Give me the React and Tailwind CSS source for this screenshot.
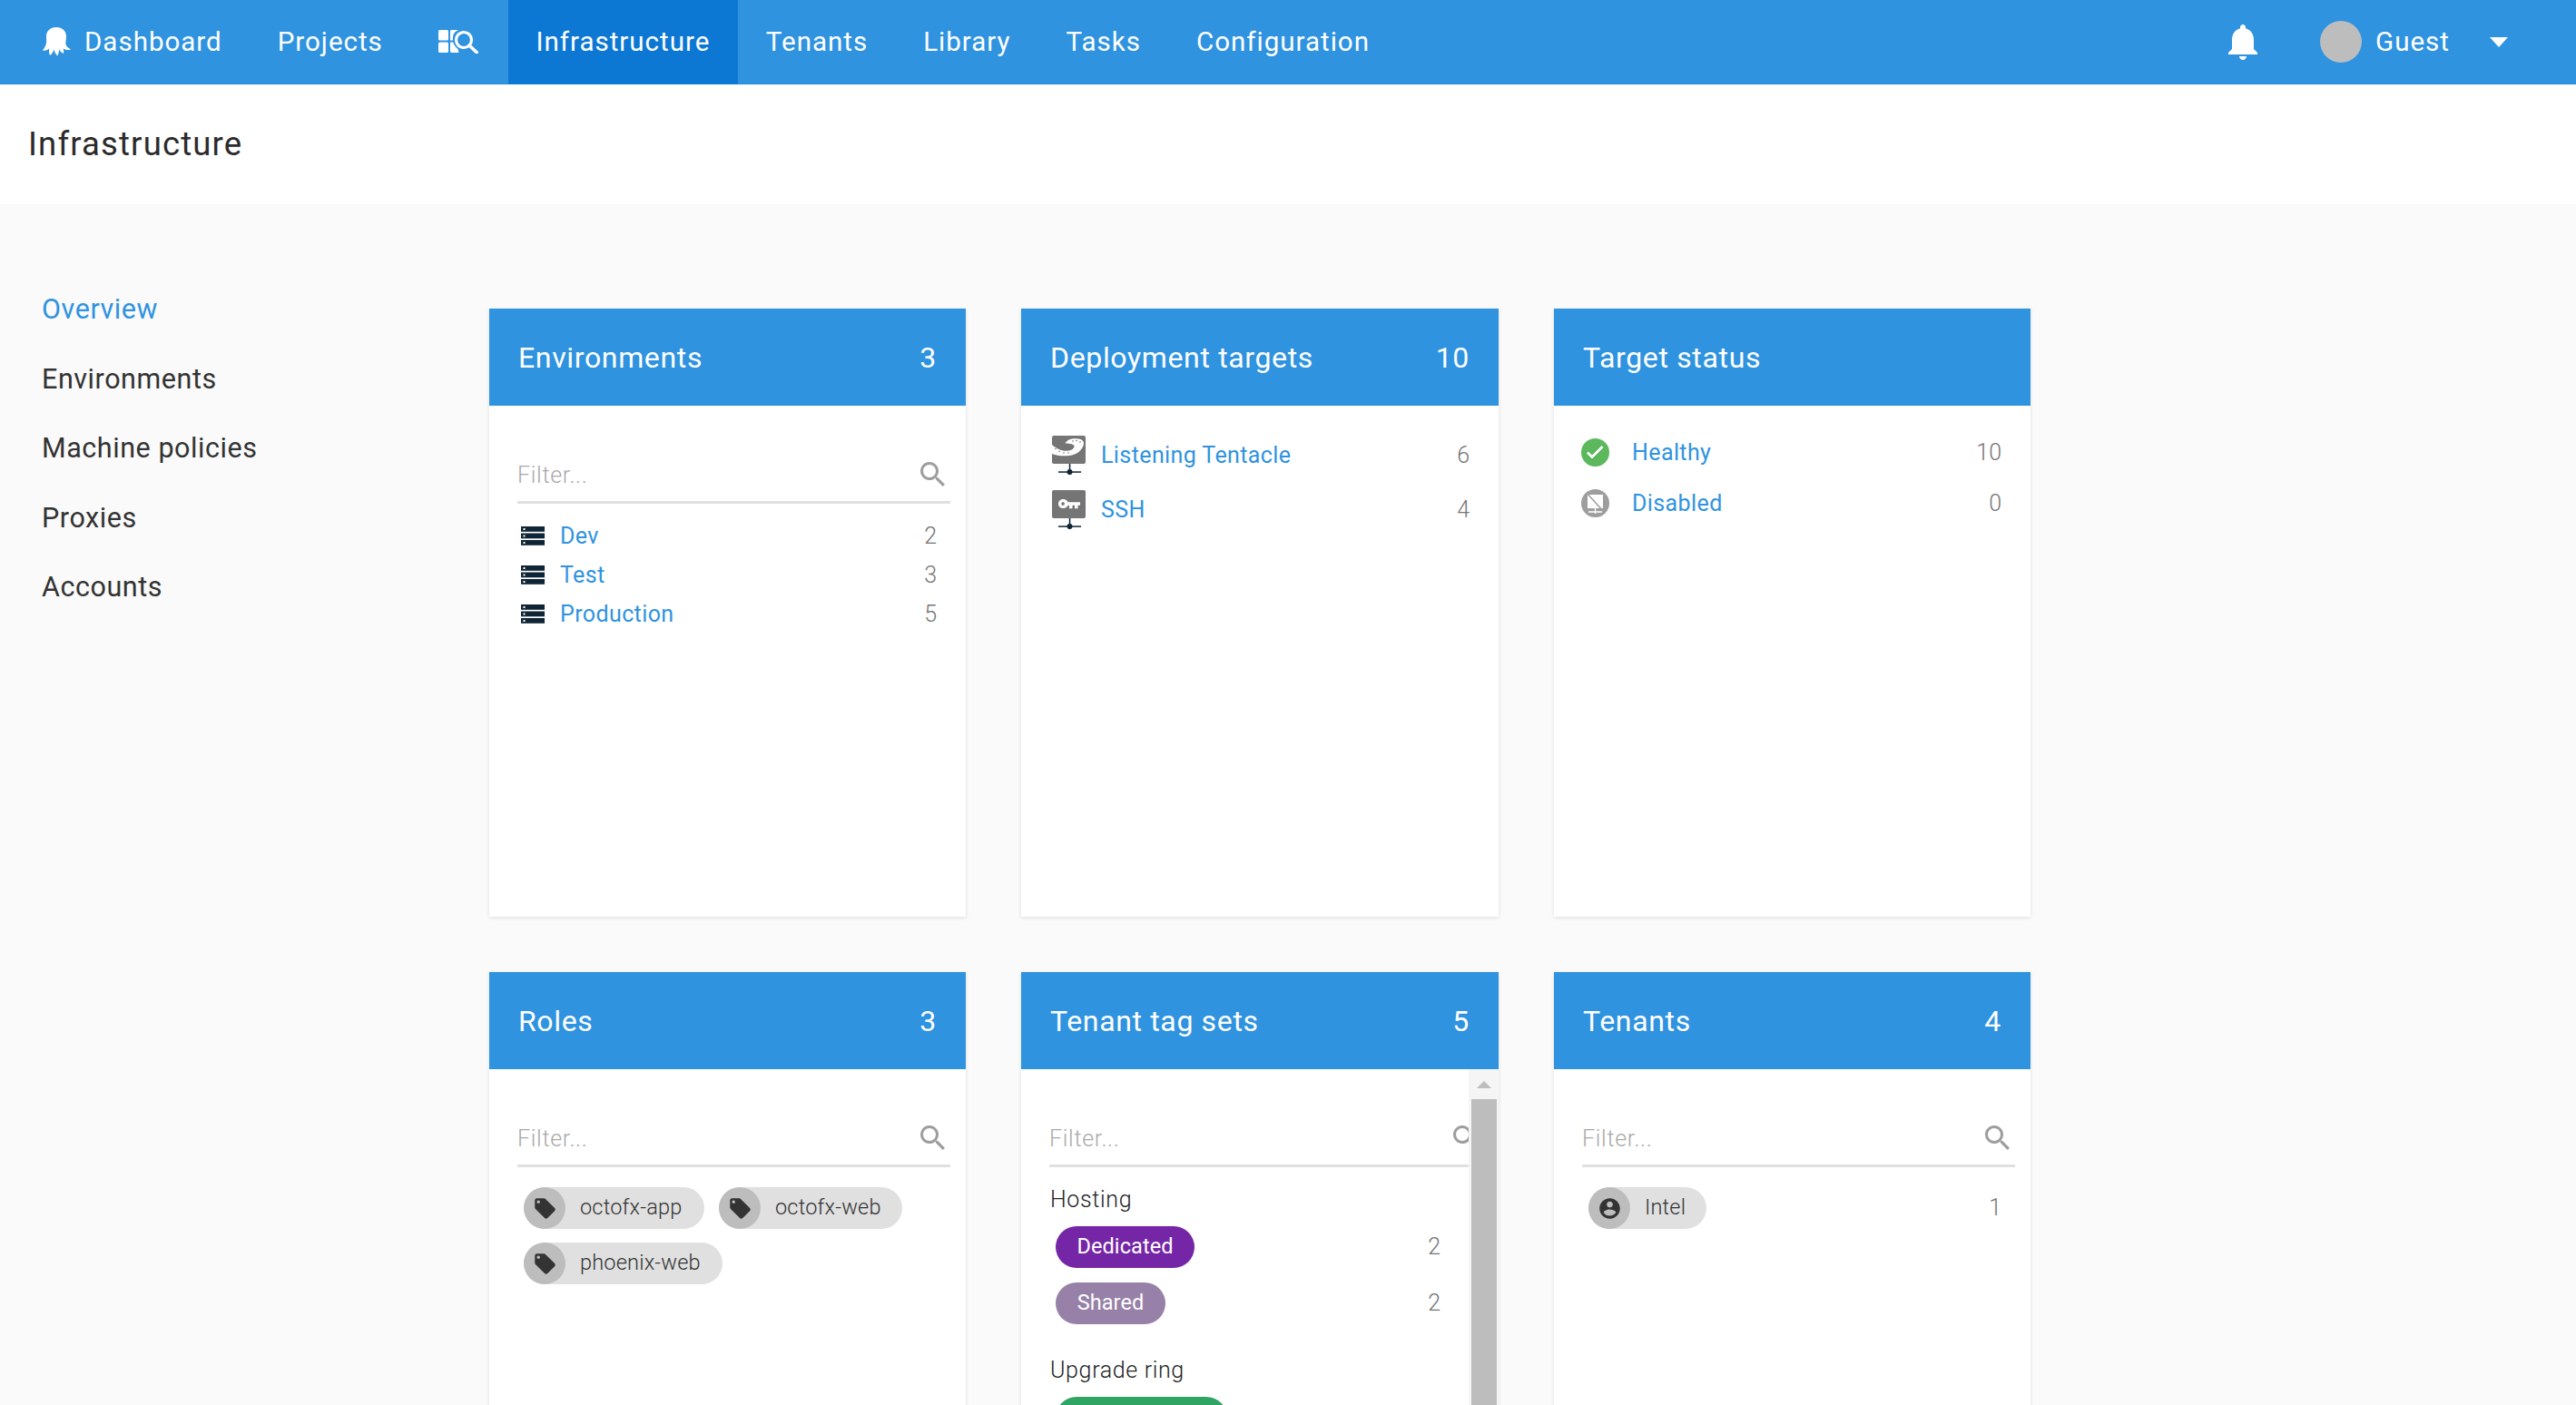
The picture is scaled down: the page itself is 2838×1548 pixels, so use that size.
import React from 'react'

const searchPath = 'M15.5 14h-.79l-.28-.27C15.41 12.59 16 11.11 16 9.5 16 5.91 13.09 3 9.5 3S3 5.91 3 9.5 5.91 16 9.5 16c1.61 0 3.09-.59 4.23-1.57l.27.28v.79l5 4.99L20.49 19l-4.99-5zm-6 0C7.01 14 5 11.99 5 9.5S7.01 5 9.5 5 14 7.01 14 9.5 11.99 14 9.5 14z'
const tagPath = 'M21.41 11.58l-9-9C12.05 2.22 11.55 2 11 2H4c-1.1 0-2 .9-2 2v7c0 .55.22 1.05.59 1.42l9 9c.36.36.86.58 1.41.58.55 0 1.05-.22 1.41-.59l7-7c.37-.36.59-.86.59-1.41 0-.55-.23-1.06-.59-1.42zM5.5 7C4.67 7 4 6.33 4 5.5S4.67 4 5.5 4 7 4.67 7 5.5 6.33 7 5.5 7z'
const accountPath = 'M12 2C6.48 2 2 6.48 2 12s4.48 10 10 10 10-4.48 10-10S17.52 2 12 2zm0 3c1.66 0 3 1.34 3 3s-1.34 3-3 3-3-1.34-3-3 1.34-3 3-3zm0 14.2c-2.5 0-4.71-1.28-6-3.22.03-1.99 4-3.08 6-3.08 1.99 0 5.97 1.09 6 3.08-1.29 1.94-3.5 3.22-6 3.22z'

const OctopusLogo = () => (
  <svg viewBox="0 0 31 32" className="w-[31px] h-[32px] shrink-0" fill="white">
    <path d="M15 0C8 0 4 4.500 4 10c0 4 .5 7-.5 9.500C2.500 22 1 24 0 25.500c2.500.5 5 0 7-2 0 3 0 5.500 1 7.500 2.500-1.500 3.500-4 4.500-6.500.5 2.500 2 5.500 4 7 1-2.500 1.500-4.500 1.500-7 1.500 2 3 4 5 4.500.5-2 0-4-.5-5.500 2.500 1.500 5.500 2 8.500 1-2.500-1.500-4.500-3-5.500-5.500C25 16.500 26 14 26 10 26 4.500 22 0 15 0z" />
  </svg>
)

const TagSearchIcon = () => (
  <svg viewBox="0 0 44 26" className="w-[44px] h-[26px]" fill="white">
    <rect x="0" y="0" width="11" height="11.500" rx="1.500" />
    <rect x="0" y="13.500" width="11" height="11.500" rx="1.500" />
    <path d="M13 1.500C13 .7 13.700 0 14.500 0H22c-3 1.400-5 3.600-5.800 6-.3 1.700-.4 3.500-.2 5.500h-3zM13 13.500h3.200c.7 2.600 2.500 5.500 5.300 7.500l1 4H14.500c-.8 0-1.500-.7-1.500-1.500z" />
    <circle cx="28" cy="11" r="8.500" fill="none" stroke="white" strokeWidth="3.200" />
    <path d="M34 17l8.500 8" stroke="white" strokeWidth="3.600" strokeLinecap="round" fill="none" />
  </svg>
)

const SearchIcon = () => (
  <svg viewBox="3 3 17.500 17.500" className="w-[27px] h-[27px] fill-[#9e9e9e]">
    <path d={searchPath} />
  </svg>
)

const ServerIcon = () => (
  <svg viewBox="0 0 26 21" className="w-[26px] h-[21px] shrink-0">
    {[0, 7.500, 15].map((y) => (
      <g key={y}>
        <rect x="0" y={y} width="26" height="5.800" fill="#0f2535" />
        <rect x="2.500" y={y + 2} width="2" height="2" fill="white" />
      </g>
    ))}
  </svg>
)

const TargetStem = () => (
  <g>
    <rect x="18.800" y="31" width="1.500" height="12" fill="#0f2535" />
    <rect x="7" y="39.300" width="25" height="1.500" fill="#0f2535" />
    <circle cx="19.500" cy="40" r="3" fill="#0f2535" />
  </g>
)

const TentacleIcon = () => (
  <svg viewBox="0 0 37 43" className="w-[37px] h-[43px] shrink-0">
    <rect width="37" height="31" rx="2" fill="#757575" />
    <path d="M0 10c4 3.500 9 6.500 14.400 6.700 4.600.1 9.600-1.200 10.200-5 -.1-1.900-4.600-3.100-10.200-3.400 1.600-2.800 5.100-4.800 9.100-5.100 5.500-.4 11.500.8 11.500 4.800 0 7-8 13.500-16 14-7 .8-14 0-19-2z" fill="white" />
    {[[4, 14.500], [8, 17.500], [13, 19], [18, 19], [23, 6], [27, 5.500], [31, 7]].map(([cx, cy]) => (
      <circle key={cx} cx={cx} cy={cy} r="0.800" fill="#757575" />
    ))}
    <TargetStem />
  </svg>
)

const SshIcon = () => (
  <svg viewBox="0 0 37 43" className="w-[37px] h-[43px] shrink-0">
    <rect width="37" height="31" rx="2" fill="#757575" />
    <path d="M12.500 10c2.500 0 4.400 1.300 5.200 3.300H31v3.500h-2.500v3.500h-3.500v-3.500h-2.500v3.500h-3.500v-3.500h-1.300c-.8 2-2.700 3.200-5.200 3.200-3 0-5.500-2-5.500-5s2.500-5 5.500-5zm0 3.300a1.800 1.800 0 100 3.500 1.800 1.800 0 000-3.500z" fill="white" />
    <TargetStem />
  </svg>
)

const HealthyIcon = () => (
  <div className="w-[31px] h-[31px] rounded-full bg-[#5cb85c] flex items-center justify-center shrink-0">
    <svg viewBox="3 5 19 15" className="w-[19px] h-[15px] fill-white">
      <path d="M9 16.170L4.830 12l-1.410 1.410L9 19 21 7l-1.410-1.410z" stroke="white" strokeWidth="1" />
    </svg>
  </div>
)

const DisabledIcon = () => (
  <div className="w-[31px] h-[31px] rounded-full bg-[#9e9e9e] flex items-center justify-center shrink-0">
    <svg viewBox="0 0 31 31" className="w-[31px] h-[31px]">
      <rect x="7" y="6" width="17" height="15" fill="white" />
      <path d="M6 4l19 21" stroke="#9e9e9e" strokeWidth="1.500" />
      <path d="M8 25h15M15.500 21v6" stroke="white" strokeWidth="1.300" />
    </svg>
  </div>
)

const Card = ({ title, count, children }) => (
  <div className="h-[670px] bg-white shadow-[0_1px_4px_rgba(0,0,0,0.12)] flex flex-col relative">
    <div className="h-[107px] shrink-0 bg-[#2f93e0] text-white flex items-center justify-between px-[32px] text-[32px] tracking-[0.650px]">
      <span>{title}</span>
      <span>{count}</span>
    </div>
    <div className="flex-1 min-h-0 overflow-hidden">{children}</div>
  </div>
)

const Filter = ({ clipped }) => (
  <div className={`mt-[62px] h-[46px] ml-[31px] border-b-[3px] border-[#e0e0e0] flex items-center justify-between ${clipped ? 'mr-0 pr-0 overflow-hidden' : 'mr-[17px] pr-[6px]'}`}>
    <span className="text-[25px] font-light tracking-[0.700px] text-[#a9a9a9] pb-[13px]">Filter...</span>
    <div className={clipped ? 'mr-[-10px] pb-[16px]' : 'pb-[16px]'}>
      <SearchIcon />
    </div>
  </div>
)

const Count = ({ children }) => <span className="text-[25px] font-light text-[#757575]">{children}</span>

const LinkRow = ({ icon, label, count, className, gap }) => (
  <div className={`flex items-center justify-between ${className}`}>
    <div className={`flex items-center ${gap}`}>
      {icon}
      <span className="text-[25px] tracking-[0.400px] text-[#2f93e0]">{label}</span>
    </div>
    <Count>{count}</Count>
  </div>
)

const Chip = ({ icon, label, width }) => (
  <div className={`h-[46px] rounded-full bg-[#e0e0e0] flex items-center ${width}`}>
    <div className="w-[46px] h-[46px] rounded-full bg-[#bdbdbd] flex items-center justify-center shrink-0">
      <svg viewBox="0 0 24 24" className="w-[27px] h-[27px] fill-[#333333]">
        <path d={icon} />
      </svg>
    </div>
    <span className="ml-[16px] text-[23.500px] font-light tracking-[0.200px] text-[#333333]">{label}</span>
  </div>
)

const TagChip = ({ label, color, width }) => (
  <div className={`h-[46px] rounded-full text-white flex items-center justify-center text-[23.500px] tracking-[0.100px] ${color} ${width}`}>
    {label}
  </div>
)

export default function App() {
  return (
    <div className="h-[1548px] w-[2838px] overflow-hidden bg-[#fafafa] font-['Roboto',sans-serif] text-[#333333]">
      {/* Top nav */}
      <div className="h-[93px] bg-[#2f93e0] border-b border-[#1f88dc] text-white text-[29.500px] tracking-[1px] flex items-center pl-[47px]">
        <OctopusLogo />
        <span className="ml-[15px]">Dashboard</span>
        <span className="ml-[61px]">Projects</span>
        <div className="ml-[61px]">
          <TagSearchIcon />
        </div>
        <div className="ml-[33px] h-[93px] w-[253px] bg-[#0d78d3] flex items-center justify-center">Infrastructure</div>
        <span className="ml-[31px]">Tenants</span>
        <span className="ml-[61px]">Library</span>
        <span className="ml-[61px]">Tasks</span>
        <span className="ml-[61px]">Configuration</span>
        <div className="ml-auto flex items-center pr-[75px]">
          <svg viewBox="4 2.500 16 19.500" className="w-[32px] h-[39px] fill-white">
            <path d="M12 22c1.100 0 2-.9 2-2h-4c0 1.100.89 2 2 2zm6-6v-5c0-3.070-1.640-5.640-4.500-6.320V4c0-.83-.67-1.500-1.500-1.500s-1.500.67-1.500 1.500v.68C7.630 5.360 6 7.920 6 11v5l-2 2v1h16v-1l-2-2z" />
          </svg>
          <div className="ml-[69px] w-[46px] h-[46px] rounded-full bg-[#bdbdbd]" />
          <span className="ml-[15px]">Guest</span>
          <div className="ml-[44px] w-0 h-0 border-x-[10px] border-x-transparent border-t-[11px] border-t-white" />
        </div>
      </div>

      {/* Title bar */}
      <div className="h-[132px] bg-white flex items-center pl-[31px] text-[36.500px] tracking-[1.150px] text-[#2b2b2b]">
        Infrastructure
      </div>

      <div className="flex">
        {/* Sidebar */}
        <div className="w-[539px] shrink-0 pt-[78px] pl-[46px] text-[30.500px] tracking-[0.550px] text-[#333333]">
          <div className="h-[76.500px] flex items-center text-[#2f93e0]">Overview</div>
          <div className="h-[76.500px] flex items-center">Environments</div>
          <div className="h-[76.500px] flex items-center">Machine policies</div>
          <div className="h-[76.500px] flex items-center">Proxies</div>
          <div className="h-[76.500px] flex items-center">Accounts</div>
        </div>

        {/* Cards */}
        <div className="pt-[115px] grid grid-cols-[525px_526px_525px] gap-x-[61px] gap-y-[61px]">
          <Card title="Environments" count="3">
            <Filter />
            <div className="mt-[14px] pl-[35px] pr-[32px]">
              <LinkRow icon={<ServerIcon />} label="Dev" count="2" className="h-[43px]" gap="gap-[17px]" />
              <LinkRow icon={<ServerIcon />} label="Test" count="3" className="h-[43px]" gap="gap-[17px]" />
              <LinkRow icon={<ServerIcon />} label="Production" count="5" className="h-[43px]" gap="gap-[17px]" />
            </div>
          </Card>

          <Card title="Deployment targets" count="10">
            <div className="pt-[33px] pl-[34px] pr-[32px]">
              <LinkRow icon={<TentacleIcon />} label="Listening Tentacle" count="6" className="h-[43px] mb-[17px]" gap="gap-[17px]" />
              <LinkRow icon={<SshIcon />} label="SSH" count="4" className="h-[43px]" gap="gap-[17px]" />
            </div>
          </Card>

          <Card title="Target status" count="">
            <div className="pt-[36px] pl-[30px] pr-[32px]">
              <LinkRow icon={<HealthyIcon />} label="Healthy" count="10" className="h-[31px] mb-[25px]" gap="gap-[25px]" />
              <LinkRow icon={<DisabledIcon />} label="Disabled" count="0" className="h-[31px]" gap="gap-[25px]" />
            </div>
          </Card>

          <Card title="Roles" count="3">
            <Filter />
            <div className="mt-[22px] pl-[38px] pr-[30px] flex flex-wrap gap-x-[16px] gap-y-[15px]">
              <Chip icon={tagPath} label="octofx-app" width="w-[199px]" />
              <Chip icon={tagPath} label="octofx-web" width="w-[202px]" />
              <Chip icon={tagPath} label="phoenix-web" width="w-[219px]" />
            </div>
          </Card>

          <Card title="Tenant tag sets" count="5">
            <div className="flex h-full">
              <div className="w-[493px] shrink-0 overflow-hidden">
                <Filter clipped />
                <div className="pl-[32px] pr-[31px]">
                  <div className="mt-[22px] h-[28px] flex items-center text-[25px] font-light tracking-[0.650px] text-[#222222]">Hosting</div>
                  <div className="mt-[15px] pl-[6px] flex items-center justify-between">
                    <TagChip label="Dedicated" color="bg-[#7526a6]" width="w-[153px]" />
                    <Count>2</Count>
                  </div>
                  <div className="mt-[16px] pl-[6px] flex items-center justify-between">
                    <TagChip label="Shared" color="bg-[#9781a8]" width="w-[121px]" />
                    <Count>2</Count>
                  </div>
                  <div className="mt-[37px] h-[28px] flex items-center text-[25px] font-light tracking-[0.650px] text-[#222222]">Upgrade ring</div>
                  <div className="mt-[15px] pl-[6px]">
                    <div className="h-[46px] w-[189px] rounded-full bg-[#2fa463]" />
                  </div>
                </div>
              </div>
              <div className="flex-1 bg-[#f5f5f5] flex flex-col items-center">
                <div className="h-[33px] flex items-center justify-center">
                  <div className="w-0 h-0 border-x-[8px] border-x-transparent border-b-[8px] border-b-[#bdbdbd]" />
                </div>
                <div className="w-[28px] flex-1 bg-[#bdbdbd]" />
              </div>
            </div>
          </Card>

          <Card title="Tenants" count="4">
            <Filter />
            <div className="mt-[22px] pl-[38px] pr-[32px] flex items-center justify-between">
              <Chip icon={accountPath} label="Intel" width="w-[130px]" />
              <Count>1</Count>
            </div>
          </Card>
        </div>
      </div>
    </div>
  )
}
